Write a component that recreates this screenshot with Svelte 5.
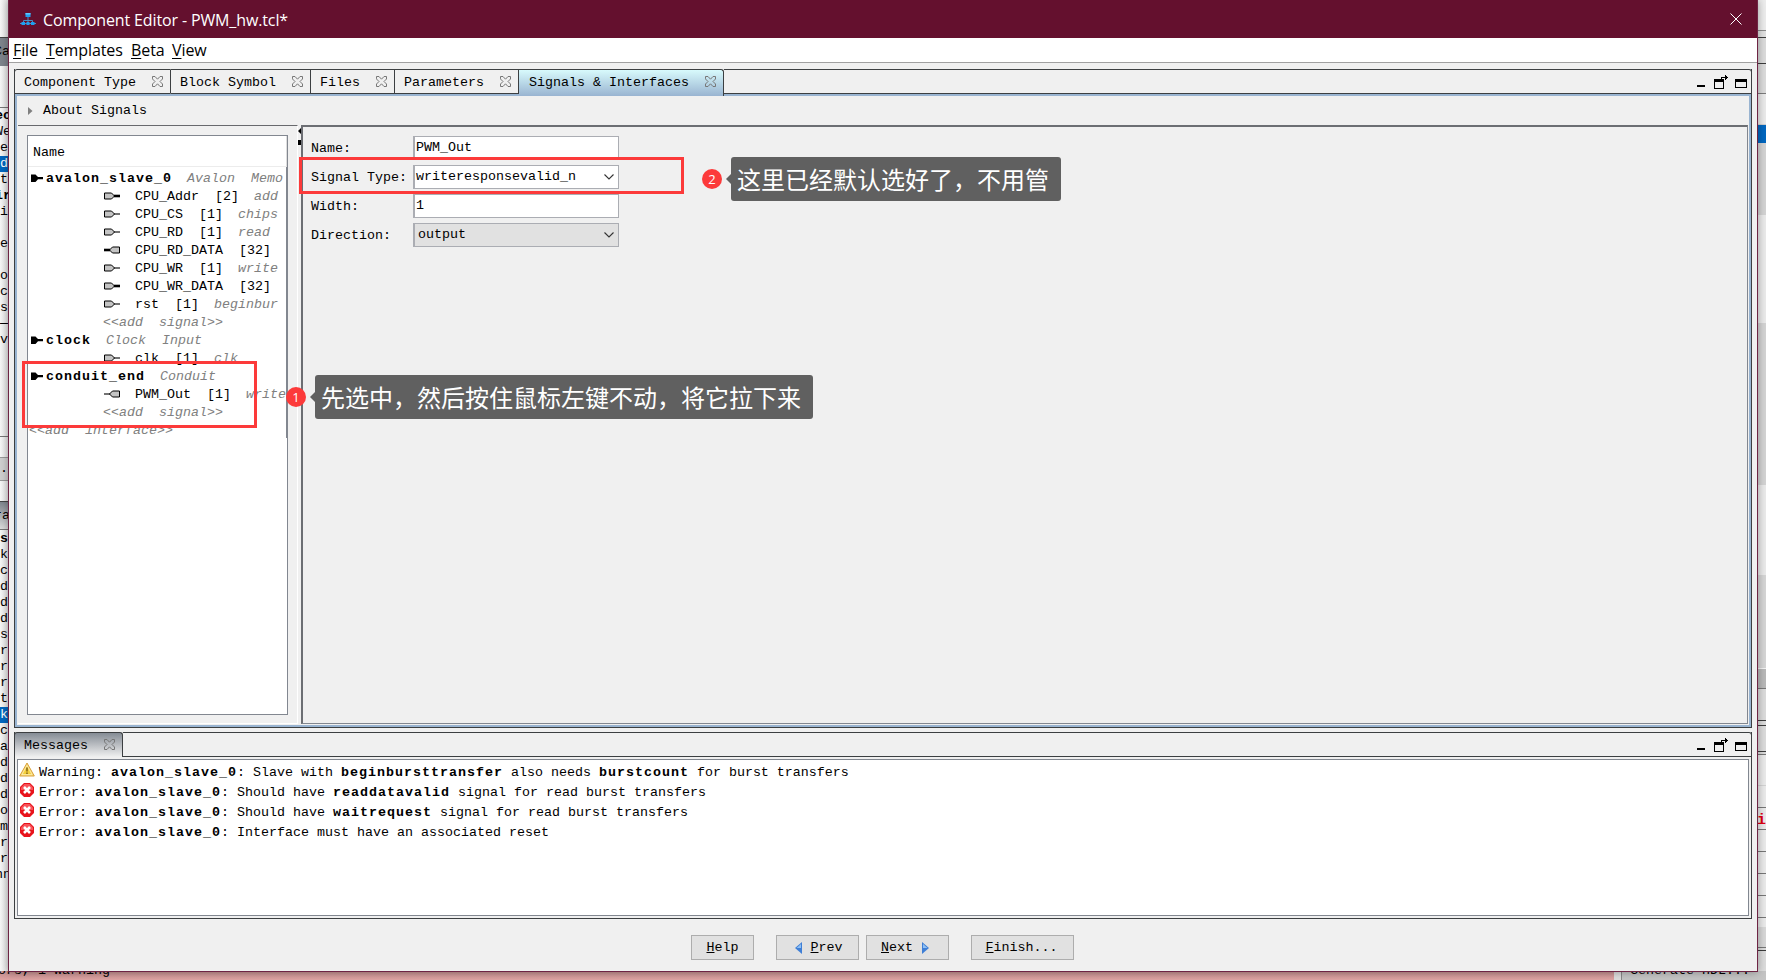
<script>
  const menus = ["File", "Templates", "Beta", "View"];
  const tabs = ["Component Type", "Block Symbol", "Files", "Parameters", "Signals & Interfaces"];
  const active = "Signals & Interfaces";

  // kind: "if" = interface, "in"/"out" = signal direction, "add" = placeholder
  const tree = [
    { kind: "if", name: "avalon_slave_0", type: "Avalon  Memo" },
    { kind: "in", name: "CPU_Addr", width: 2, type: "add", bus: true },
    { kind: "in", name: "CPU_CS", width: 1, type: "chips" },
    { kind: "in", name: "CPU_RD", width: 1, type: "read" },
    { kind: "out", name: "CPU_RD_DATA", width: 32, type: "", bus: true },
    { kind: "in", name: "CPU_WR", width: 1, type: "write" },
    { kind: "in", name: "CPU_WR_DATA", width: 32, type: "", bus: true },
    { kind: "in", name: "rst", width: 1, type: "beginbur" },
    { kind: "add", name: "<<add  signal>>" },
    { kind: "if", name: "clock", type: "Clock  Input" },
    { kind: "in", name: "clk", width: 1, type: "clk" },
    { kind: "if", name: "conduit_end", type: "Conduit" },
    { kind: "out", name: "PWM_Out", width: 1, type: "write" },
    { kind: "add", name: "<<add  signal>>" },
    { kind: "addif", name: "<<add  interface>>" }
  ];

  const fields = [
    { label: "Name:", value: "PWM_Out" },
    { label: "Signal Type:", value: "writeresponsevalid_n", select: true },
    { label: "Width:", value: "1" },
    { label: "Direction:", value: "output", select: true, grey: true }
  ];

  // odd parts are bold
  const messages = [
    { level: "Warning", parts: ["", "avalon_slave_0", ": Slave with ", "beginbursttransfer", " also needs ", "burstcount", " for burst transfers"] },
    { level: "Error", parts: ["", "avalon_slave_0", ": Should have ", "readdatavalid", " signal for read burst transfers"] },
    { level: "Error", parts: ["", "avalon_slave_0", ": Should have ", "waitrequest", " signal for read burst transfers"] },
    { level: "Error", parts: ["", "avalon_slave_0", ": Interface must have an associated reset"] }
  ];

  const backTop = ["*ec", "We", "e", "!d", "t", "*ir", "i", "", "e", "", "o", "c", "s", "—", "v"];
  const backLow = ["*s", "k", "c", "d", "d", "d", "s", "r", "r", "r", "t", "!k", "c", "a", "d", "d", "d", "o", "m", "r", "r", "nn"];

  // [height, colour] slices of the window behind, right side
  const slices = [
    [30, "#ededed"], [1, "#8c8c8c"], [6, "#e2e2e2"], [1, "#3c3c3c"], [25, "#dcdcdc"], [1, "#3c3c3c"],
    [29, "#dcdcdc"], [1, "#7c7c7c"], [30, "#ebebeb"], [1, "#d0d0d0"], [18, "#0067c0"], [72, "#d4d4d4"],
    [108, "#ebebeb"], [162, "#d4d4d4"], [90, "#ebebeb"], [93, "#d6d6d6"], [1, "#f4f4f4"], [19, "#b9b9b9"],
    [1, "#777"], [31, "#dcdcdc"], [1, "#3c3c3c"], [4, "#dcdcdc"], [1, "#3c3c3c"], [25, "#dcdcdc"],
    [1, "#3c3c3c"], [2, "#dcdcdc"], [1, "#777"], [30, "#ebebeb"], [1, "#d4d4d4"], [21, "#ebebeb"],
    [1, "#777"], [21, "#ebebeb"], [1, "#777"], [21, "#ebebeb"], [1, "#777"], [21, "#ebebeb"],
    [1, "#777"], [21, "#ebebeb"], [1, "#777"], [21, "#ebebeb"], [1, "#777"], [9, "#ebebeb"],
    [20, "#d8d8d8"], [1, "#777"], [2, "#dcdcdc"], [1, "#3c3c3c"], [30, "#dcdcdc"]
  ];
</script>

{#snippet closeX()}
  <svg class="x" width="11" height="11" viewBox="0 0 11 11">
    <path d="M.5 2.2V.5H3L5.5 3.2 8 .5h2.5V3L8 5.5 10.5 8v2.5H8L5.5 7.8 3 10.5H.5V8L3 5.5.5 3z" />
  </svg>
{/snippet}

{#snippet paneButtons()}
  <svg class="pane-buttons" width="52" height="14" viewBox="0 0 52 14" shape-rendering="crispEdges">
    <path d="M1 10h8v2H1zM18 4h10v10H18zM19 7v6h8V7zM25 2h4V0h1v1h1v1h1v1h-1v1h-1v1h-1V3h-3v1h-1zM39 4h12v9H39zM40 7v5h10V7z" fill-rule="evenodd" />
  </svg>
{/snippet}

{#snippet strip(rows)}
  {#each rows as row}
    <div class="brow" class:bold={row[0] == "*"} class:sel={row[0] == "!"} class:two={row.replace(/[*!]/, "").length > 1}>{row.replace(/[*!]/, "")}</div>
  {/each}
{/snippet}

<div class="desktop">
  <div class="behind">
    <div class="left">
      <div class="btop"><div class="btab">Ca</div></div>
      <div class="blist">{@render strip(backTop)}</div>
      <div class="bbutton"><span>.</span></div>
      <div class="btab low">ra</div>
      <div class="blist">{@render strip(backLow)}</div>
    </div>
    <div class="right">
      {#each slices as [h, c]}
        <div style="height:{h}px;background:{c}"></div>
      {/each}
      <b class="ip">ip</b>
    </div>
    <div class="bottom">
      <div class="status">ors, 1 Warning</div>
      <div class="generate">Generate HDL...</div>
    </div>
  </div>

  <div class="window">
    <header>
      <svg width="16" height="14" viewBox="0 0 16 14">
        <path d="M8 4v6M3.500 10V8.500h9V10M0 11.500h16" stroke="#4a8fc0" fill="none" />
        <path d="M5.500 1h5v4h-5zM1.500 10h3.500v3H1.500zM6.500 10h3v3h-3zM11 10h3.500v3H11z" fill="#1d9ff0" />
        <path d="M5.500 1h5v1.500h-5z" fill="#62c8ff" />
      </svg>
      <span>Component Editor - PWM_hw.tcl*</span>
      <svg class="close" width="12" height="12" viewBox="0 0 12 12"><path d="M.5.5l11 11M11.500.5l-11 11" stroke="#fff" fill="none" /></svg>
    </header>
    <nav>
      {#each menus as menu, i}
        <span class="m{i}"><u>{menu[0]}</u>{menu.slice(1)}</span>
      {/each}
    </nav>

    <section class="pane editor">
      <div class="tabs">
        {#each tabs as tab}
          <div class="tab" class:active={tab == active}>{tab}{@render closeX()}</div>
        {/each}
        <div class="rest">{@render paneButtons()}</div>
      </div>
      <div class="frame">
        <div class="about">
          <svg width="5" height="8" viewBox="0 0 5 8"><path d="M0 0l4.500 4L0 8z" fill="#808080" /></svg>
          <span>About Signals</span>
        </div>
        <div class="split">
          <div class="side">
            <div class="tree">
              <div class="thead">Name</div>
              <div class="rows">
                {#each tree as row}
                  <div class="row {row.kind}">
                    {#if row.kind == "if"}
                      <svg width="13" height="8" viewBox="0 0 13 8"><path d="M1 .5h4.500L8 3h5v2.200H8L5.500 8H1z" /></svg><b>{row.name}</b><i>{"  " + row.type}</i>
                    {:else if row.kind == "in" || row.kind == "out"}
                      <svg class:flip={row.kind == "out"} width="16" height="8" viewBox="0 0 16 8">
                        <path d="M.5 1h7l3 3-3 3h-7z" fill="#c4c4c4" stroke="#000" />
                        <path d="M10 4h6" stroke="#000" stroke-width={row.bus ? 2.6 : 1.1} />
                      </svg><span>{row.name + "  [" + row.width + "]"}</span><i>{"  " + row.type}</i>
                    {:else}
                      <i>{row.name}</i>
                    {/if}
                  </div>
                {/each}
              </div>
            </div>
          </div>
          <div class="divider">
            <svg width="3" height="20" viewBox="0 0 3 20"><path d="M3 0v6L0 3zM0 12h3v5H0z" /></svg>
          </div>
          <div class="form">
            {#each fields as f}
              <div class="field">
                <span class="label">{f.label}</span>
                <div class="input" class:grey={f.grey}>
                  {f.value}
                  {#if f.select}
                    <svg width="10" height="6" viewBox="0 0 10 6"><path d="M.5.5L5 5 9.500.5" stroke="#333" stroke-width="1.100" fill="none" /></svg>
                  {/if}
                </div>
              </div>
            {/each}
          </div>
        </div>
      </div>
    </section>

    <section class="pane log">
      <div class="tabs">
        <div class="tab dim">Messages{@render closeX()}</div>
        <div class="rest">{@render paneButtons()}</div>
      </div>
      <div class="messages">
        {#each messages as m}
          <div class="msg">
            {#if m.level == "Warning"}
              <svg width="16" height="15" viewBox="0 0 16 15">
                <path d="M8 1L15.300 14H.7z" fill="#f7d774" stroke="#d9a13a" stroke-linejoin="round" />
                <path d="M8 3.500L13 12.600H3z" fill="#f3cf3c" stroke="#fff3c0" stroke-width=".7" />
                <path d="M8 5.500v4M8 10.500v1.500" stroke="#8a6a1c" stroke-width="1.600" />
              </svg>
            {:else}
              <svg class="err" width="14" height="14" viewBox="0 0 14 14">
                <path d="M4 0h6l4 4v6l-4 4H4L0 10V4z" fill="#e8141c" />
                <path d="M4.500 1h5L13 4.500v2.500H1V4.500z" fill="#f8545a" />
                <path d="M4 4l6 6M10 4l-6 6" stroke="#fff" stroke-width="2.600" />
              </svg>
            {/if}
            <span>{m.level}: {#each m.parts as part, i}{#if i % 2}<b>{part}</b>{:else}{part}{/if}{/each}</span>
          </div>
        {/each}
      </div>
    </section>

    <footer>
      <button class="help"><span><u>H</u>elp</span></button>
      <button class="prev">
        <svg width="7" height="12" viewBox="0 0 7 12"><path d="M7 0v12L0 6z" fill="#3f7fd6" /><path d="M6 2v4H1.500z" fill="#8fc0f4" /></svg>
        <span><u>P</u>rev</span>
      </button>
      <button class="next">
        <span><u>N</u>ext</span>
        <svg width="7" height="12" viewBox="0 0 7 12"><path d="M0 0v12l7-6z" fill="#3f7fd6" /><path d="M1 2v4h4.500z" fill="#8fc0f4" /></svg>
      </button>
      <button class="finish"><span><u>F</u>inish...</span></button>
    </footer>
  </div>

  <div class="box one"></div>
  <div class="box two"></div>
  <div class="note first"><span class="dot">1</span><p>先选中，然后按住鼠标左键不动，将它拉下来</p></div>
  <div class="note second"><span class="dot">2</span><p>这里已经默认选好了，不用管</p></div>
</div>

<style>
  :global(body) {
    background: #f0f0f0;
    overflow: hidden;
  }
  * {
    box-sizing: border-box;
  }
  svg {
    display: block;
    flex: none;
  }
  .desktop {
    position: relative;
    width: 1766px;
    height: 980px;
    overflow: hidden;
    font-family: "Liberation Mono", "Noto Sans CJK SC", monospace;
    font-size: 13.333px;
    color: #000;
    white-space: nowrap;
  }
  b {
    letter-spacing: 1px;
  }
  .behind {
    display: grid;
    grid-template: 971px 9px / 8px 1fr 8px;
    height: 980px;
  }
  .left {
    overflow: hidden;
    background: linear-gradient(90deg, #f8f8f8, #e4e4e4);
  }
  .btop {
    height: 108px;
    padding-top: 37px;
    border-bottom: 1px solid #777;
  }
  .btab {
    height: 29px;
    border-top: 1px solid #444;
    background: #7e848c;
    text-indent: -6px;
    line-height: 28px;
  }
  .btab.low {
    margin-top: 20px;
    background: linear-gradient(#80868e, #dcdcdc);
    border-bottom: 1px solid #777;
  }
  .blist {
    height: 328px;
  }
  .blist:last-child {
    height: 440px;
    padding-top: 1px;
  }
  .brow {
    height: 16px;
    line-height: 16px;
  }
  .brow.bold {
    font-weight: bold;
  }
  .brow.two {
    text-indent: -5px;
  }
  .brow.sel {
    background: #0067c0;
    color: #fff;
  }
  .bbutton {
    height: 45px;
    padding-top: 20px;
    border-top: 1px solid #777;
  }
  .bbutton span {
    display: block;
    height: 24px;
    border: solid #999;
    border-width: 1px 0;
    background: #d0d0d0;
    line-height: 22px;
  }
  .right {
    grid-column: 3;
    position: relative;
    overflow: hidden;
  }
  .ip {
    position: absolute;
    left: -1px;
    top: 811px;
    line-height: 20px;
    font-size: 15px;
    color: #e00010;
  }
  .bottom {
    grid-column: 1 / 4;
    display: flex;
    background: #dcdcdc;
  }
  .bottom div {
    height: 9px;
    overflow: hidden;
    line-height: 0;
  }
  .bottom .status {
    width: 1614px;
    background: linear-gradient(#c28e8e, #dfa3a3);
    text-indent: -2px;
  }
  .bottom .generate {
    flex: 1;
    margin-left: 7px;
    padding-left: 8px;
    border-left: 1px solid #888;
    background: #c4c4c4;
  }
  .window {
    position: absolute;
    left: 8px;
    top: 0;
    width: 1750px;
    height: 972px;
    display: flex;
    flex-direction: column;
    background: #f0f0f0;
    border: 1px solid #6e2444;
    border-top: 0;
    box-shadow: 0 0 8px rgba(0, 0, 0, 0.35);
  }
  header {
    display: flex;
    align-items: center;
    height: 38px;
    padding: 0 15px 0 11px;
    background: #64102e;
    color: #fff;
    font: 16px/38px "Open Sans", sans-serif;
  }
  header span {
    flex: 1;
    margin: 1px 0 0 7px;
    letter-spacing: -0.13px;
  }
  nav {
    display: flex;
    height: 25px;
    padding-left: 4px;
    background: #fff;
    border-bottom: 1px solid #a0a0a0;
    font: 16px/25px "Open Sans", sans-serif;
    letter-spacing: -0.1px;
  }
  nav u {
    text-underline-offset: 2px;
  }
  nav .m0 {
    width: 33px;
  }
  nav .m1 {
    width: 85px;
  }
  nav .m2 {
    width: 41px;
  }
  .pane {
    flex: none;
    margin: 6px 5px 0;
    border: 1px solid #3c3f41;
    border-top: 0;
  }
  .tabs {
    display: flex;
    height: 25px;
    margin: 0 -1px;
    line-height: 25px;
  }
  .tab {
    display: flex;
    align-items: center;
    gap: 16px;
    height: 25px;
    padding: 1px 7px 0 9px;
    border: solid #3c3f41;
    border-width: 1px 1px 1px 0;
  }
  .tab:first-child {
    border-left-width: 1px;
    border-top-left-radius: 3px;
  }
  .tab.active {
    height: 27px;
    padding-left: 10px;
    padding-bottom: 2px;
    border-bottom: 0;
    border-top-right-radius: 3px;
    background: linear-gradient(#d8fafc, #99b4d1);
  }
  .tab.dim {
    border-bottom: 0;
    border-top-right-radius: 3px;
    background: linear-gradient(#858c95, #f0f0f0);
  }
  .x {
    margin-top: -2px;
  }
  .x path {
    fill: none;
    stroke: #777;
    stroke-width: 1;
  }
  .rest {
    display: flex;
    justify-content: flex-end;
    align-items: center;
    flex: 1;
    padding: 1px 3px 0 0;
    border: solid #3c3f41;
    border-width: 1px 1px 1px 0;
    border-top-right-radius: 3px;
  }
  .editor {
    height: 659px;
  }
  .frame {
    height: 633px;
    border: 2px solid #99b4d1;
    padding-left: 1px;
    background: #f0f0f0;
  }
  .about {
    display: flex;
    align-items: center;
    gap: 10px;
    height: 29px;
    padding-left: 10px;
  }
  .split {
    display: flex;
    height: 599px;
  }
  .side {
    width: 280px;
    padding: 9px;
    border-top: 1px solid #68696d;
    border-right: 1px solid #fff;
    border-bottom: 1px solid #fff;
  }
  .tree {
    width: 261px;
    height: 580px;
    border: 1px solid #828790;
    background: #fff;
    overflow: hidden;
  }
  .thead {
    height: 31px;
    padding-left: 5px;
    line-height: 34px;
    border-bottom: 1px solid #ececec;
    border-right: 1px solid #ddd;
  }
  .rows {
    height: 271px;
    padding-top: 2px;
    border-right: 1px solid #828790;
    overflow: hidden;
  }
  .row {
    display: flex;
    align-items: center;
    height: 18px;
    padding-left: 76px;
    overflow: hidden;
    white-space: pre;
  }
  .row.if {
    padding-left: 2px;
  }
  .row.addif {
    padding-left: 2px;
  }
  .row b {
    margin-left: 3px;
  }
  .row span {
    margin-left: 15px;
  }
  .row i {
    margin-left: -1px;
    color: #808080;
  }
  .flip {
    transform: scaleX(-1);
  }
  .divider {
    width: 3px;
    padding-top: 3px;
  }
  .form {
    flex: 1;
    display: flex;
    flex-direction: column;
    gap: 5px;
    margin-right: 1px;
    padding: 9px 0 0 8px;
    border: 1px solid #828790;
    border-width: 2px 1px 1px 2px;
    border-color: #6c6e73 #828790 #828790 #6c6e73;
  }
  .field {
    display: flex;
    height: 24px;
    line-height: 26px;
  }
  .label {
    width: 102px;
  }
  .input {
    display: flex;
    align-items: center;
    justify-content: space-between;
    width: 206px;
    padding: 0 4px 0 1px;
    border: 1px solid #abadb3;
    border-left-width: 2px;
    background: #fff;
  }
  .input.grey {
    padding-left: 3px;
    background: #e1e1e1;
  }
  .log {
    margin-top: 4px;
    height: 187px;
  }
  .messages {
    height: 157px;
    margin: 2px;
    padding-top: 2px;
    border: 1px solid #828790;
    background: #fff;
  }
  .msg {
    display: flex;
    gap: 4px;
    height: 20px;
    padding-left: 1px;
    line-height: 21px;
  }
  .msg .err {
    margin: 1px 1px 0 1px;
  }
  footer {
    display: flex;
    height: 25px;
    margin: 16px 0 0 682px;
  }
  button {
    display: flex;
    align-items: center;
    justify-content: center;
    gap: 9px;
    height: 25px;
    padding: 0;
    border: 1px solid #adadad;
    background: #e1e1e1;
    color: #000;
    font: inherit;
  }
  .help {
    width: 63px;
    margin-right: 22px;
  }
  .prev {
    width: 83px;
    margin-right: 7px;
    padding-left: 2px;
  }
  .next {
    width: 83px;
    margin-right: 22px;
    padding-right: 5px;
  }
  .finish {
    width: 103px;
    padding-right: 2px;
  }
  .box {
    position: absolute;
    border: 3px solid #fc3a3a;
  }
  .box.one {
    left: 22px;
    top: 361px;
    width: 235px;
    height: 67px;
  }
  .box.two {
    left: 299px;
    top: 157px;
    width: 385px;
    height: 37px;
  }
  .note {
    position: absolute;
    display: flex;
    align-items: center;
    gap: 9px;
    height: 44px;
    font-family: "Noto Sans CJK SC", sans-serif;
    color: #fff;
  }
  .note.first {
    left: 286px;
    top: 375px;
  }
  .note.second {
    left: 702px;
    top: 157px;
  }
  .dot {
    width: 20px;
    height: 20px;
    border-radius: 50%;
    background: #fc3a3a;
    font: 13px/20px "Open Sans", sans-serif;
    text-align: center;
  }
  .note p {
    position: relative;
    height: 44px;
    margin: 0;
    padding: 0 12px 0 6px;
    border-radius: 3px;
    background: #606060;
    font-size: 24px;
    line-height: 43px;
  }
  .note p::before {
    content: "";
    position: absolute;
    left: -5px;
    top: 17px;
    border: solid transparent;
    border-width: 5px 5px 5px 0;
    border-right-color: #606060;
  }
</style>
